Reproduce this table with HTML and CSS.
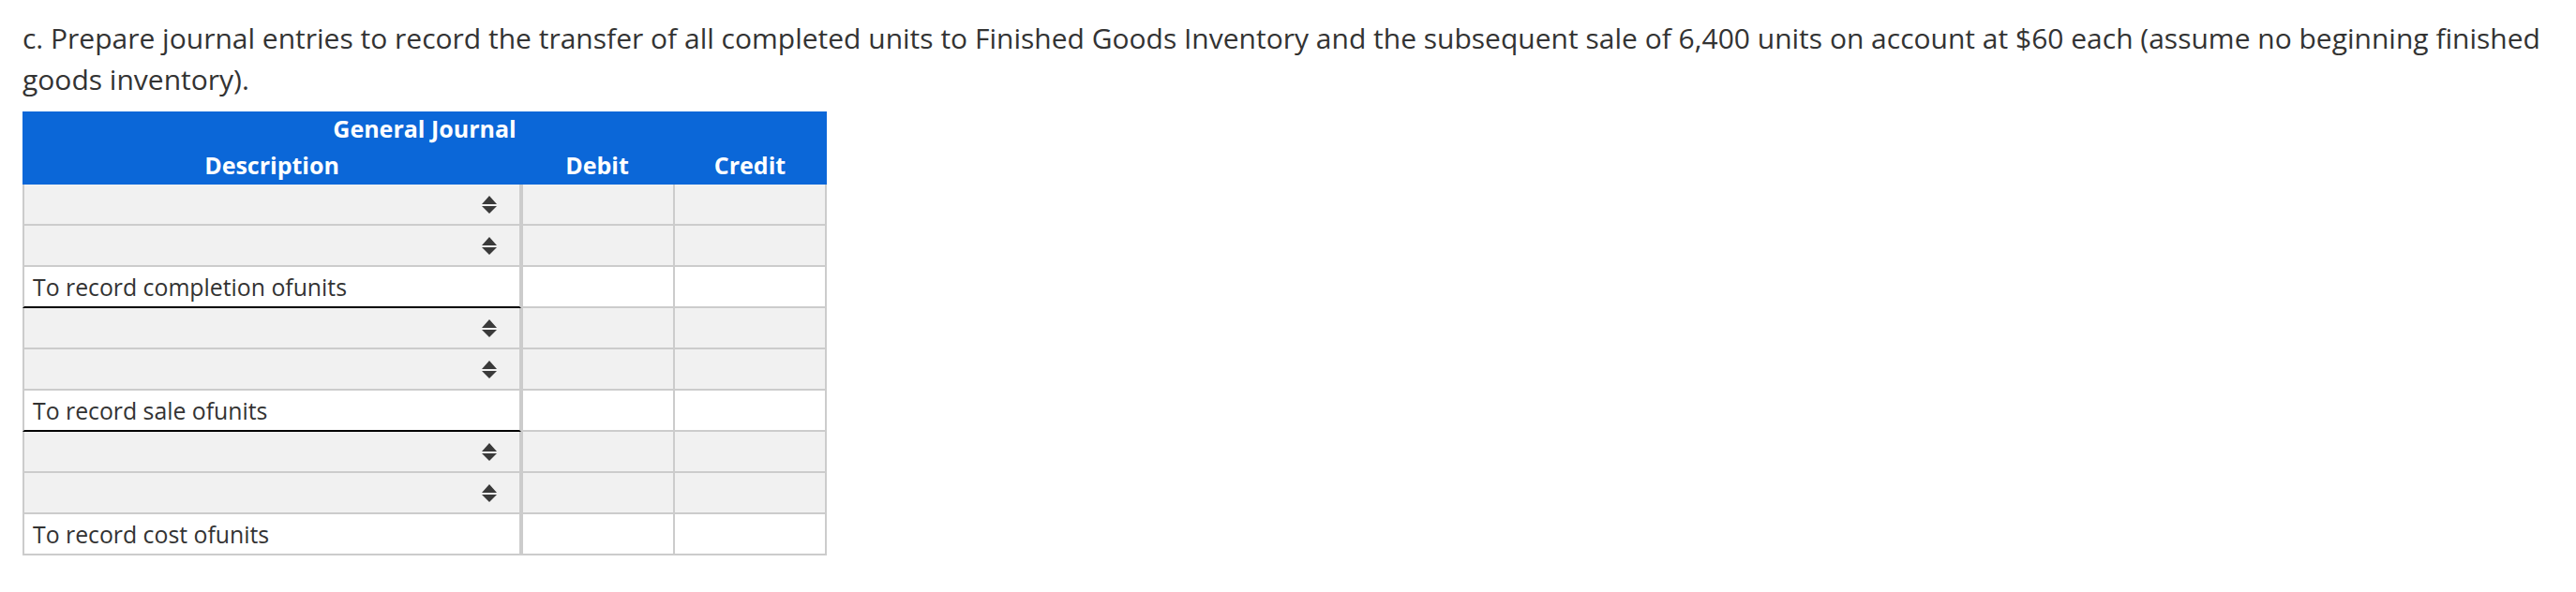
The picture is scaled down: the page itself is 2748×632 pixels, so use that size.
FILE: index.html
```html
<!DOCTYPE html>
<html lang="en">
<head>
<meta charset="utf-8">
<title>General Journal</title>
<link rel="stylesheet" href="styles.css">
</head>
<body>
<div class="page">
  <p class="question">c. Prepare journal entries to record the transfer of all completed units to Finished Goods Inventory and the subsequent sale of 6,400 units on account at $60 each (assume no beginning finished goods inventory).</p>

  <div class="journal">
    <div class="journal-head">
      <div class="journal-title">General Journal</div>
      <div class="journal-cols">
        <div>Description</div>
        <div>Debit</div>
        <div>Credit</div>
      </div>
    </div>

    <div class="row">
      <div class="cell desc"><svg class="sort" viewBox="0 0 16 19" width="16" height="19"><path d="M8 0L16 9H0Z M0 11H16L8 19Z"/></svg></div>
      <div class="cell debit"></div>
      <div class="cell credit"></div>
    </div>
    <div class="row">
      <div class="cell desc"><svg class="sort" viewBox="0 0 16 19" width="16" height="19"><path d="M8 0L16 9H0Z M0 11H16L8 19Z"/></svg></div>
      <div class="cell debit"></div>
      <div class="cell credit"></div>
    </div>
    <div class="row note">
      <div class="cell desc closing">To record completion ofunits</div>
      <div class="cell debit"></div>
      <div class="cell credit"></div>
    </div>

    <div class="row">
      <div class="cell desc"><svg class="sort" viewBox="0 0 16 19" width="16" height="19"><path d="M8 0L16 9H0Z M0 11H16L8 19Z"/></svg></div>
      <div class="cell debit"></div>
      <div class="cell credit"></div>
    </div>
    <div class="row">
      <div class="cell desc"><svg class="sort" viewBox="0 0 16 19" width="16" height="19"><path d="M8 0L16 9H0Z M0 11H16L8 19Z"/></svg></div>
      <div class="cell debit"></div>
      <div class="cell credit"></div>
    </div>
    <div class="row note">
      <div class="cell desc closing">To record sale ofunits</div>
      <div class="cell debit"></div>
      <div class="cell credit"></div>
    </div>

    <div class="row">
      <div class="cell desc"><svg class="sort" viewBox="0 0 16 19" width="16" height="19"><path d="M8 0L16 9H0Z M0 11H16L8 19Z"/></svg></div>
      <div class="cell debit"></div>
      <div class="cell credit"></div>
    </div>
    <div class="row">
      <div class="cell desc"><svg class="sort" viewBox="0 0 16 19" width="16" height="19"><path d="M8 0L16 9H0Z M0 11H16L8 19Z"/></svg></div>
      <div class="cell debit"></div>
      <div class="cell credit"></div>
    </div>
    <div class="row note">
      <div class="cell desc">To record cost ofunits</div>
      <div class="cell debit"></div>
      <div class="cell credit"></div>
    </div>
  </div>
</div>
</body>
</html>
```

FILE: styles.css
```css
* {
  box-sizing: border-box;
}

html, body {
  margin: 0;
  padding: 0;
  background: #ffffff;
}

body {
  font-family: "Open Sans", "Noto Sans", "Liberation Sans", sans-serif;
  color: #333333;
}

.page {
  padding: 19px 24px 0 24px;
}

.question {
  margin: 0 0 12px 0;
  font-size: 30px;
  line-height: 44px;
  color: #333333;
}

.journal {
  width: 858px;
}

.journal-head {
  background: #0b67d8;
  color: #ffffff;
  font-weight: 700;
  font-size: 25px;
  height: 78px;
}

.journal-title {
  height: 37px;
  line-height: 37px;
  text-align: center;
}

.journal-cols {
  display: grid;
  grid-template-columns: 532px 162px 164px;
  height: 40px;
  line-height: 40px;
  text-align: center;
}

.row {
  display: grid;
  grid-template-columns: 532px 162px 164px;
  height: 44px;
}

.cell {
  background: #f1f1f1;
  border-bottom: 2px solid #cccccc;
  border-left: 2px solid #cccccc;
}

.desc {
  border-right: 2px solid #cccccc;
  display: flex;
  align-items: center;
  justify-content: flex-end;
  padding: 0 24px 0 9px;
  font-size: 24.8px;
  color: #333333;
}

.credit {
  border-right: 2px solid #cccccc;
}

.note .cell {
  background: #ffffff;
}

.note .desc {
  justify-content: flex-start;
}

.desc.closing {
  border-bottom-color: #000000;
}

.sort {
  display: block;
  fill: #3a3a3a;
}
```
